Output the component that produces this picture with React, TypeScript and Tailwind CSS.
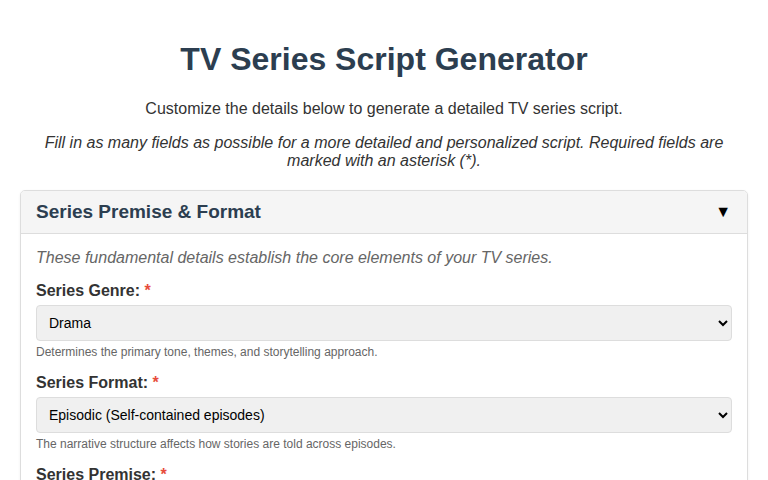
import { useState } from "react";

const fields = [
  {
    label: "Series Genre:",
    value: "Drama",
    options: ["Drama", "Comedy", "Thriller", "Sci-Fi", "Fantasy", "Crime"],
    help: "Determines the primary tone, themes, and storytelling approach.",
  },
  {
    label: "Series Format:",
    value: "Episodic (Self-contained episodes)",
    options: [
      "Episodic (Self-contained episodes)",
      "Serialized (Continuous storyline)",
      "Hybrid",
    ],
    help: "The narrative structure affects how stories are told across episodes.",
  },
];

export default function App() {
  const [values, setValues] = useState(fields.map((f) => f.value));

  return (
    <div className="min-h-screen bg-white px-5 font-['Liberation_Sans',Arial,sans-serif] text-[#333]">
      <h1 className="pt-[41px] text-center text-[32px] font-bold leading-[37px] text-[#2c3e50]">
        TV Series Script Generator
      </h1>
      <p className="mt-[22px] text-center text-base leading-[18px]">
        Customize the details below to generate a detailed TV series script.
      </p>
      <p className="mt-4 px-5 text-center text-base italic leading-[18px]">
        Fill in as many fields as possible for a more detailed and personalized script. Required
        fields are marked with an asterisk (*).
      </p>

      <div className="mt-5 overflow-hidden rounded-[5px] border border-[#ddd] shadow-[0_1px_3px_rgba(0,0,0,0.06)]">
        <div className="flex h-[43px] items-center justify-between border-b border-[#ddd] bg-[#f5f5f5] pl-[15px] pr-[16px]">
          <h2 className="text-[19px] font-bold text-[#2c3e50]">Series Premise &amp; Format</h2>
          <span className="text-[16px] text-black">▼</span>
        </div>
        <div className="px-[15px] pt-[15px]">
          <p className="text-base italic leading-[18px] text-[#666]">
            These fundamental details establish the core elements of your TV series.
          </p>
          {fields.map((f, i) => (
            <div key={f.label} className="mt-[15px]">
              <label className="block text-base font-bold leading-[18px] text-[#333]">
                {f.label} <span className="text-[#e74c3c]">*</span>
              </label>
              <select
                value={values[i]}
                onChange={(e) =>
                  setValues((prev) => prev.map((v, j) => (j === i ? e.target.value : v)))
                }
                className="mt-[5px] block h-9 w-full rounded border border-[#ddd] bg-[#f0f0f0] px-2 text-sm text-black"
              >
                {f.options.map((o) => (
                  <option key={o}>{o}</option>
                ))}
              </select>
              <p className="mt-1 text-xs leading-[14px] text-[#666]">{f.help}</p>
            </div>
          ))}
          <div className="mt-[15px]">
            <label className="block text-base font-bold leading-[18px] text-[#333]">
              Series Premise: <span className="text-[#e74c3c]">*</span>
            </label>
          </div>
          <div className="h-10" />
        </div>
      </div>
    </div>
  );
}
